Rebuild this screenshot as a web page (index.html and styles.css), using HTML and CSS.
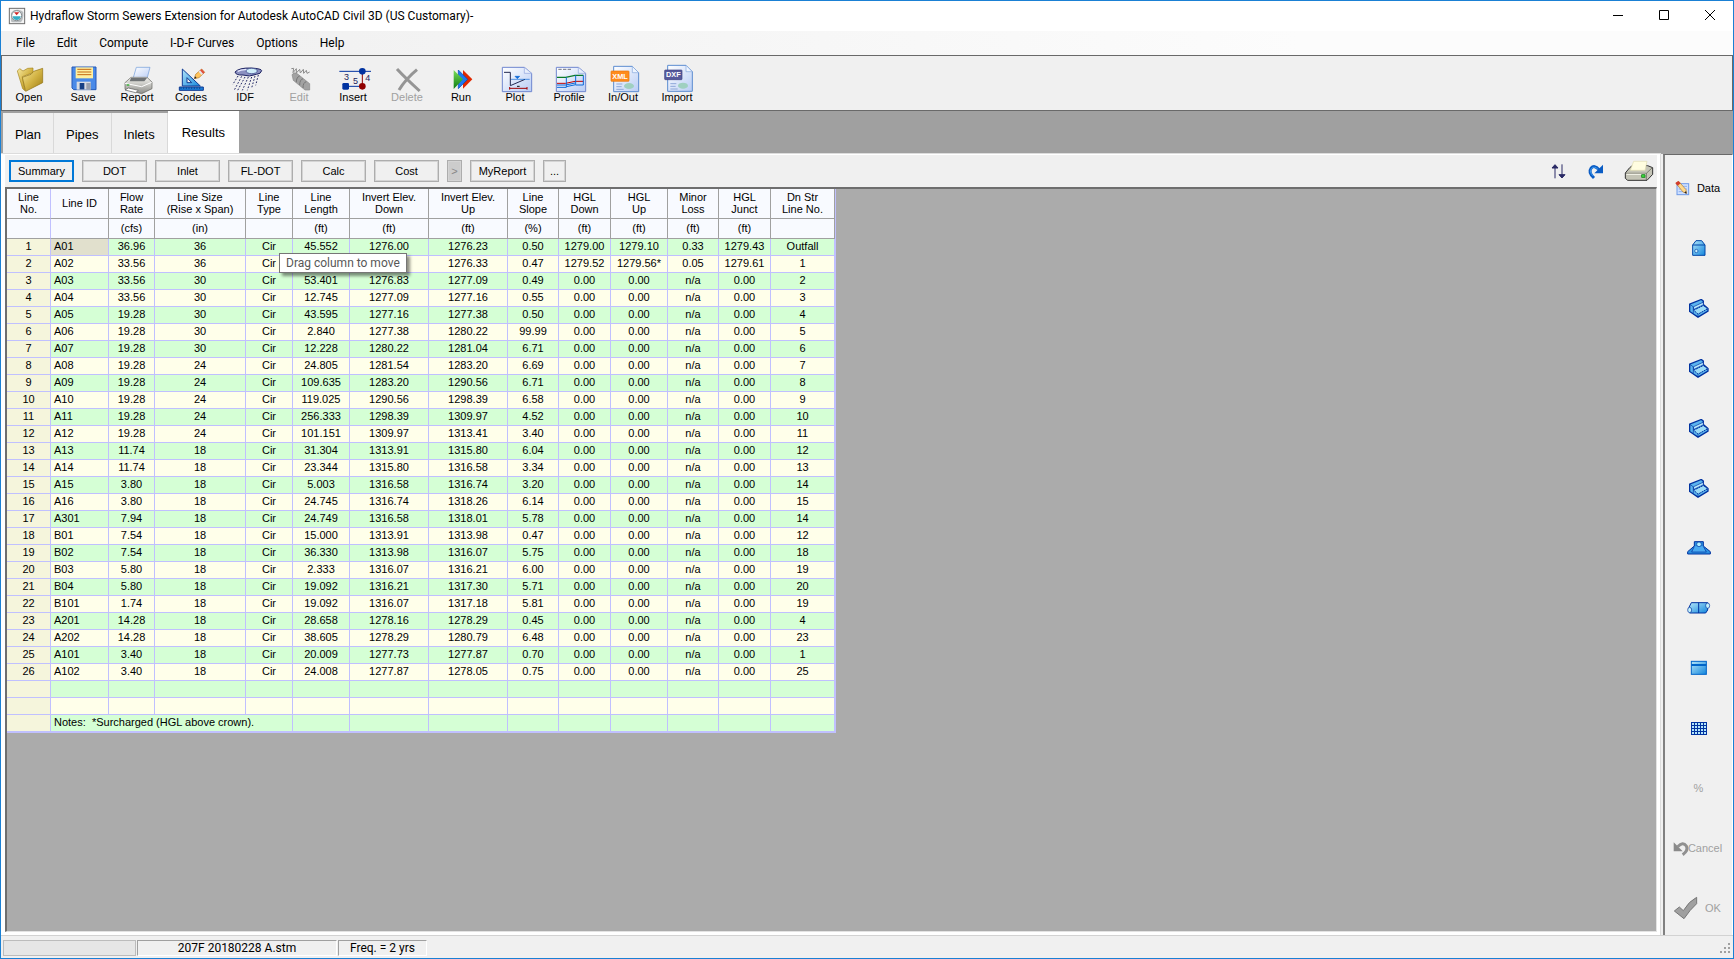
FILE: index.html
```html
<!DOCTYPE html>
<html lang="en">
<head>
    <meta charset="UTF-8">
    <meta name="viewport" content="width=device-width, initial-scale=1.0">
    <title>Hydraflow Storm Sewers Extension for Autodesk AutoCAD Civil 3D (US Customary)-</title>
    <link rel="stylesheet" href="styles.css">
</head>
<body>
    <!-- shared gradients and the repeated curb inlet icon -->
    <svg class="defs" width="0" height="0" aria-hidden="true">
        <defs>
            <linearGradient id="gold" x1="0" y1="0" x2="1" y2="1"><stop offset="0" stop-color="#f7e9a0"/><stop offset="0.5" stop-color="#d3b445"/><stop offset="1" stop-color="#9c7a10"/></linearGradient>
            <linearGradient id="blue" x1="0" y1="0" x2="1" y2="1"><stop offset="0" stop-color="#b4e6fa"/><stop offset="1" stop-color="#1286dc"/></linearGradient>
            <linearGradient id="green" x1="0" y1="0" x2="0" y2="1"><stop offset="0" stop-color="#7ce05a"/><stop offset="1" stop-color="#0a7a10"/></linearGradient>
            <linearGradient id="page" x1="0" y1="0" x2="1" y2="1"><stop offset="0" stop-color="#ffffff"/><stop offset="1" stop-color="#b9cdf5"/></linearGradient>
            <linearGradient id="grey" x1="0" y1="0" x2="0" y2="1"><stop offset="0" stop-color="#f4f4f0"/><stop offset="1" stop-color="#8c8c88"/></linearGradient>
        </defs>
        <symbol id="curb" viewBox="0 0 60 56">
            <path d="M2 15 L37 1 L43 6 V16 L57 28 V36 L27 54 L2 37z" fill="#5bb5ee" stroke="#0032a0" stroke-width="4"/>
            <path d="M13 23 L43 9 V17 L14 31z" fill="#b4e6fa" stroke="#0032a0" stroke-width="2"/>
            <path d="M14 33 L43 19 L56 29 L27 45z" fill="#9cdcf6" stroke="#0032a0" stroke-width="3" stroke-dasharray="6 2"/>
            <path d="M3 16 L13 23 V42 M27 45 V53" fill="none" stroke="#0032a0" stroke-width="2"/>
        </symbol>
    </svg>

    <header class="title-bar">
        <svg class="app-icon" viewBox="0 0 48 48">
            <rect x="1" y="1" width="46" height="46" fill="#f4f4f4" stroke="#6e6e6e" stroke-width="3"/>
            <path d="M6 15 V38 Q6 43 12 43 H35 Q44 38 43 13 Q38 5 25 5 Q12 5 6 15z" fill="#b9bdbf"/>
            <circle cx="23" cy="23" r="15" fill="#fff" stroke="#858c90" stroke-width="3"/>
            <path d="M11 25 H35 Q34 36 23 36 Q12 36 11 25z" fill="#35adc5"/>
            <path d="M15 13 H31 L23 22z" fill="#d22525"/>
        </svg>
        <h1>Hydraflow Storm Sewers Extension for Autodesk AutoCAD Civil 3D (US Customary)-</h1>
        <div class="window-buttons">
            <button type="button" aria-label="Minimize"><svg viewBox="0 0 10 10"><path d="M0 5.5H10"/></svg></button>
            <button type="button" aria-label="Maximize"><svg viewBox="0 0 10 10"><path d="M.5 .5H9.5V9.5H.5z"/></svg></button>
            <button type="button" aria-label="Close"><svg viewBox="0 0 10 10"><path d="M0 0L10 10M10 0L0 10"/></svg></button>
        </div>
    </header>

    <nav class="menu-bar">
        <button type="button">File</button>
        <button type="button">Edit</button>
        <button type="button">Compute</button>
        <button type="button">I-D-F Curves</button>
        <button type="button">Options</button>
        <button type="button">Help</button>
    </nav>

    <div class="toolbar">
        <button type="button">
            <svg viewBox="0 0 96 75">
                <path d="M13 15 L20 8 L30 15 L44 7 L60 6 V20 L28 32 L36 74 L29 68z" fill="url(#gold)" stroke="#a58318" stroke-width="2"/>
                <path d="M28 34 L54 25 L62 16 L89 7 V50 L38 76z" fill="url(#gold)" stroke="#8f700e" stroke-width="2"/>
            </svg>
            Open
        </button>
        <button type="button">
            <svg viewBox="0 0 96 75">
                <path d="M15 3 H87 V71 H20 L15 66z" fill="#4a8ae8" stroke="#2459b8" stroke-width="3"/>
                <path d="M26 4 H78 V37 H26z" fill="#fff0a0"/>
                <path d="M31 10 H73 M31 18 H73 M31 26 H73" stroke="#c56a14" stroke-width="3"/>
                <path d="M29 47 H71 V71 H29z" fill="#d9dce2"/>
                <path d="M38 51 H52 V70 H38z" fill="#174084"/>
                <path d="M58 51 H71 V71 H58z" fill="#9aa1ae"/>
            </svg>
            Save
        </button>
        <button type="button">
            <svg viewBox="0 0 96 75">
                <path d="M46 4 H87 L78 38 H36z" fill="url(#page)" stroke="#6c98d8" stroke-width="2"/>
                <path d="M30 34 H78 L93 48 V68 L62 83 L12 70 V50z" fill="url(#grey)" stroke="#60605c" stroke-width="2"/>
                <path d="M30 36 H78 L70 46 H26z" fill="#6f7375"/>
                <path d="M12 52 L62 62 L92 49" fill="none" stroke="#fff" stroke-width="3"/>
                <path d="M22 66 L52 73 L44 80 L12 72z" fill="#fff" stroke="#555" stroke-width="2"/>
                <path d="M17 57 H25" stroke="#2aae2a" stroke-width="4"/>
            </svg>
            Report
        </button>
        <button type="button">
            <svg viewBox="0 0 96 75">
                <path d="M22 9 L76 60 H22z M36 35 V50 H50z" fill="url(#blue)" fill-rule="evenodd" stroke="#103c94" stroke-width="3"/>
                <path d="M13 63 H85 V73 H13z" fill="#1c7ed8" stroke="#103c94" stroke-width="3"/>
                <path d="M18 64 V69 M26 64 V69 M34 64 V69 M42 64 V69 M50 64 V69 M58 64 V69 M66 64 V69 M74 64 V69" stroke="#08306e" stroke-width="2"/>
                <path d="M58 38 L62 25 L80 9 L89 19 L72 35z" fill="#ffc45c" stroke="#b07a30" stroke-width="2"/>
                <path d="M74 14 L80 9 L89 19 L83 25z" fill="#e0503c"/>
                <path d="M71 17 L75 13 L84 23 L80 27z" fill="#e6e6ee"/>
                <path d="M58 38 L60 31 L65 36z" fill="#222"/>
            </svg>
            Codes
        </button>
        <button type="button">
            <svg viewBox="0 0 96 75">
                <path d="M18 18 Q30 5 66 6 Q98 8 98 14 Q96 24 82 25 Q60 34 42 27 Q20 28 18 18z" fill="#8a90c0" stroke="#1f2563" stroke-width="3"/>
                <ellipse cx="68" cy="15" rx="17" ry="8" fill="#cfeefa" stroke="#2d3a80" stroke-width="2"/>
                <path d="M26 16 Q38 10 52 11" stroke="#e8eaff" stroke-width="4" fill="none"/>
                <path d="M27 30 L11 56 M38 31 L16 72 M48 33 L26 73 M58 33 L40 73 M68 33 L55 73 M78 30 L68 66 M88 27 L80 58" stroke="#1f2563" stroke-width="3" stroke-dasharray="5 5" fill="none"/>
            </svg>
            IDF
        </button>
        <button type="button" disabled>
            <svg viewBox="0 0 96 75">
                <path d="M25 8 L32 7 L30 20 L40 8 L40 21 L50 10 L52 21 L61 10 L62 22 L70 13 L72 22 L80 18" fill="none" stroke="#8c8c8c" stroke-width="3"/>
                <path d="M27 26 Q34 16 44 24 L80 53 V72 H66 L31 43z" fill="#a2a2a2" stroke="#888" stroke-width="2"/>
                <path d="M50 30 Q40 33 40 49 M60 38 Q50 41 50 57 M70 47 Q60 49 60 66" fill="none" stroke="#777" stroke-width="3"/>
            </svg>
            Edit
        </button>
        <button type="button">
            <svg viewBox="0 0 96 75">
                <path d="M7 16 H102 M26 61 H76" stroke="#0032a0" stroke-width="3"/>
                <path d="M76 16 V61" stroke="#900000" stroke-width="3"/>
                <circle cx="76" cy="16" r="10" fill="#0032a0"/>
                <circle cx="76" cy="61" r="10" fill="#900000"/>
                <rect x="16" y="51" width="20" height="20" rx="4" fill="#0032a0"/>
                <text x="21" y="43" class="svg-digit">3</text>
                <text x="48" y="54" class="svg-digit">5</text>
                <text x="85" y="45" class="svg-digit">4</text>
            </svg>
            Insert
        </button>
        <button type="button" disabled>
            <svg viewBox="0 0 96 75">
                <path d="M18 9 Q42 35 86 75 M78 11 Q45 38 24 72" fill="none" stroke="#959595" stroke-width="9"/>
            </svg>
            Delete
        </button>
        <button type="button">
            <svg viewBox="0 0 96 75">
                <path d="M54 12 L82 40 L54 68z" fill="#e02800"/>
                <path d="M40 12 L68 40 L40 68z" fill="#1c78f0" stroke="#0046b4" stroke-width="2"/>
                <path d="M26 12 L54 40 L26 69z" fill="url(#green)"/>
            </svg>
            Run
        </button>
        <button type="button">
            <svg viewBox="0 0 96 75">
                <path d="M10 4 H76 L98 22 V77 H10z" fill="url(#page)" stroke="#6f86cf" stroke-width="3"/>
                <path d="M76 4 V22 H98z" fill="#e8effc" stroke="#8ea2dc" stroke-width="2"/>
                <path d="M15 19 H34 V59 L78 40" fill="none" stroke="#222850" stroke-width="3"/>
                <path d="M36 40 H92 M48 31 H62 L55 38z" fill="#0a68d8" stroke="#0a68d8" stroke-width="2"/>
                <path d="M32 67 H84 M32 63 V71 M84 63 V71" stroke="#a00000" stroke-width="3"/>
                <path d="M54 61 H62" stroke="#111" stroke-width="3"/>
            </svg>
            Plot
        </button>
        <button type="button">
            <svg viewBox="0 0 96 75">
                <path d="M10 4 H76 L98 22 V77 H10z" fill="url(#page)" stroke="#6f86cf" stroke-width="3"/>
                <path d="M76 4 V22 H98z" fill="#e8effc" stroke="#8ea2dc" stroke-width="2"/>
                <path d="M16 10 H54" stroke="#334" stroke-width="2" stroke-dasharray="10 4"/>
                <path d="M12 34 H38 L66 28 H91" fill="none" stroke="#0a7a28" stroke-width="4"/>
                <path d="M12 52 H38 L66 46 H91" fill="none" stroke="#c00000" stroke-width="3"/>
                <path d="M12 64 H40 V34 M40 62 L68 56 V28 M68 57 H91 V28 M12 57 H38 L66 51" fill="none" stroke="#0a68d8" stroke-width="3"/>
            </svg>
            Profile
        </button>
        <button type="button">
            <svg viewBox="0 0 96 75">
                <path d="M20 1 H76 L95 20 V77 H20z" fill="url(#page)" stroke="#5c8cd0" stroke-width="3"/>
                <path d="M76 1 V20 H95z" fill="#edf4ff" stroke="#83a8dc" stroke-width="2"/>
                <ellipse cx="66" cy="60" rx="15" ry="9" fill="#9fd0c0"/>
                <path d="M28 54 H46 M28 62 H44 M28 70 H50" stroke="#8fa8d8" stroke-width="3"/>
                <rect x="12" y="15" width="54" height="31" rx="2" fill="#ff8c1e" stroke="#e87408" stroke-width="2"/>
                <text x="39" y="38" class="svg-tag">XML</text>
            </svg>
            In/Out
        </button>
        <button type="button">
            <svg viewBox="0 0 96 75">
                <path d="M20 -2 H75 L94 17 V76 H20z" fill="url(#page)" stroke="#5c8cd0" stroke-width="3"/>
                <path d="M75 -2 V17 H94z" fill="#edf4ff" stroke="#83a8dc" stroke-width="2"/>
                <ellipse cx="66" cy="59" rx="15" ry="9" fill="#9fd0c0"/>
                <path d="M28 53 H46 M28 61 H44 M28 69 H50" stroke="#8fa8d8" stroke-width="3"/>
                <rect x="11" y="12" width="52" height="29" rx="2" fill="#565a9c" stroke="#3c4080" stroke-width="2"/>
                <text x="37" y="34" class="svg-tag">DXF</text>
            </svg>
            Import
        </button>
    </div>

    <nav class="tabs">
        <button type="button">Plan</button>
        <button type="button">Pipes</button>
        <button type="button">Inlets</button>
        <button type="button" class="active">Results</button>
    </nav>

    <main class="workspace">
        <section class="results">
            <div class="report-bar">
                <button type="button" class="selected">Summary</button>
                <button type="button">DOT</button>
                <button type="button">Inlet</button>
                <button type="button">FL-DOT</button>
                <button type="button">Calc</button>
                <button type="button">Cost</button>
                <button type="button" class="narrow" disabled>&gt;</button>
                <button type="button">MyReport</button>
                <button type="button" class="more">...</button>
                <div class="report-actions">
                    <button type="button" aria-label="Sort">
                        <svg width="15" height="15" viewBox="0 0 45 45"><path d="M12 43 V4 M3 12 L12 2 L21 12z M33 1 V40 M24 32 L33 42 L42 32z" fill="#2b2b66" stroke="#2b2b66" stroke-width="3"/></svg>
                    </button>
                    <button type="button" aria-label="Refresh">
                        <svg width="15" height="15" viewBox="0 0 45 45"><path d="M18 42 Q0 25 9 13 Q19 1 33 17" fill="none" stroke="#0a5cc4" stroke-width="9"/><path d="M16 36 Q2 24 11 13 Q19 5 30 16" fill="none" stroke="#3f9bf0" stroke-width="3"/><path d="M45 2 V28 H19z" fill="#0a5cc4"/></svg>
                    </button>
                    <button type="button" aria-label="Print">
                        <svg width="28" height="20" viewBox="0 0 84 60"><path d="M14 20 L1 36 V52 L8 58 H66 L83 40 V20 L68 14 H22z" fill="#c4c4b6" stroke="#333" stroke-width="3"/><path d="M26 1 H66 L60 28 H16z" fill="#fffde0" stroke="#e0dcb0" stroke-width="2"/><path d="M2 37 H64 L82 20 M64 37 V57" fill="none" stroke="#55554c" stroke-width="2"/><path d="M4 40 H62" stroke="#efefe4" stroke-width="4"/><rect x="50" y="41" width="10" height="8" fill="#36d036" stroke="#0a7a10" stroke-width="2"/></svg>
                    </button>
                </div>
            </div>

            <div class="grid-area">
                <table class="results-table">
                    <colgroup>
                        <col class="c44"><col class="c58"><col class="c46"><col class="c91"><col class="c47"><col class="c57"><col class="c79"><col class="c79"><col class="c51"><col class="c52"><col class="c57"><col class="c51"><col class="c52"><col class="c64">
                    </colgroup>
                    <thead>
                        <tr>
                            <th>Line<br>No.</th>
                            <th>Line ID</th>
                            <th>Flow<br>Rate</th>
                            <th>Line Size<br>(Rise x Span)</th>
                            <th>Line<br>Type</th>
                            <th>Line<br>Length</th>
                            <th>Invert Elev.<br>Down</th>
                            <th>Invert Elev.<br>Up</th>
                            <th>Line<br>Slope</th>
                            <th>HGL<br>Down</th>
                            <th>HGL<br>Up</th>
                            <th>Minor<br>Loss</th>
                            <th>HGL<br>Junct</th>
                            <th>Dn Str<br>Line No.</th>
                        </tr>
                        <tr class="units">
                            <td></td><td></td><td>(cfs)</td><td>(in)</td><td></td><td>(ft)</td><td>(ft)</td><td>(ft)</td><td>(%)</td><td>(ft)</td><td>(ft)</td><td>(ft)</td><td>(ft)</td><td></td>
                        </tr>
                    </thead>
                    <tbody id="results-body"></tbody>
                </table>
                <div class="tooltip" role="tooltip">Drag column to move</div>
            </div>
        </section>

        <aside class="side-bar">
            <button type="button" class="data">
                <svg width="14" height="14" viewBox="0 0 42 42"><rect x="6" y="8" width="35" height="33" fill="#cfe0ff" stroke="#6f9ae8" stroke-width="3"/><path d="M11 16 H36 M11 24 H36 M11 32 H30" stroke="#8db0ee" stroke-width="3"/><path d="M3 7 L11 1 L33 26 L35 37 L24 33z" fill="#ffd98a" stroke="#b07a30" stroke-width="2"/><path d="M1 6 L10 0 L17 7 L8 14z" fill="#d23c2c"/><path d="M35 38 L33 30 L28 35z" fill="#222"/></svg>
                Data
            </button>
            <button type="button" aria-label="Manhole"><svg width="14" height="16" viewBox="0 0 42 48"><path d="M2 15 L12 2 H29 L39 15 V46 H2z M2 15 H39" fill="url(#blue)" stroke="#0046a8" stroke-width="3"/><circle cx="13" cy="33" r="5" fill="#c8f0ff" stroke="#0046a8" stroke-width="2"/></svg></button>
            <button type="button" aria-label="Curb inlet"><svg width="20" height="19"><use href="#curb"/></svg></button>
            <button type="button" aria-label="Grate inlet"><svg width="20" height="19"><use href="#curb"/></svg></button>
            <button type="button" aria-label="Combination inlet"><svg width="20" height="19"><use href="#curb"/></svg></button>
            <button type="button" aria-label="Generic inlet"><svg width="20" height="19"><use href="#curb"/></svg></button>
            <button type="button" aria-label="Headwall"><svg width="24" height="14" viewBox="0 0 72 42"><path d="M2 39 V32 L22 15 V2 H49 V15 L70 32 V39z" fill="#2a8fe0" stroke="#0032a0" stroke-width="3"/><path d="M22 16 L14 33 H58 L49 16" fill="#4aaaf0" stroke="#0032a0" stroke-width="2"/><circle cx="36" cy="10" r="7" fill="#aef0ff" stroke="#0032a0" stroke-width="2"/></svg></button>
            <button type="button" aria-label="Pipe"><svg width="24" height="12" viewBox="0 0 72 36"><path d="M13 2 H62 V24 L56 33 H8 L6 16z" fill="url(#blue)" stroke="#0032a0" stroke-width="3"/><path d="M35 2 V33" stroke="#0032a0" stroke-width="3"/><ellipse cx="8" cy="24" rx="6" ry="8" fill="#c4f2fc" stroke="#0032a0" stroke-width="2"/><ellipse cx="62" cy="11" rx="6" ry="8" fill="#c4f2fc" stroke="#0032a0" stroke-width="2"/></svg></button>
            <button type="button" aria-label="Window"><svg width="16" height="14" viewBox="0 0 48 42"><rect x="1" y="1" width="45" height="39" fill="url(#blue)" stroke="#0064c8" stroke-width="3"/><path d="M1 12 H46" stroke="#0064c8" stroke-width="6"/></svg></button>
            <button type="button" aria-label="Table"><svg width="16" height="13" viewBox="0 0 48 39"><rect width="48" height="39" fill="#0032a0"/><path d="M3 6H45M3 15H45M3 24H45M3 33H45" stroke="#b4e6fa" stroke-width="6" stroke-dasharray="6 3"/></svg></button>
            <button type="button" disabled>%</button>
            <button type="button" class="cancel" disabled><svg width="15" height="15" viewBox="0 0 45 45"><path d="M2 4 V31 H29z" fill="#8a8a8a"/><path d="M14 17 Q30 0 40 15 Q47 28 29 41" fill="none" stroke="#909090" stroke-width="9"/></svg>Cancel</button>
            <button type="button" class="ok" disabled><svg width="23" height="22" viewBox="0 0 69 66"><path d="M1 42 L16 30 L28 41 Q45 12 68 1 V20 Q48 38 30 65z" fill="#a0a0a0" stroke="#777" stroke-width="3"/></svg>OK</button>
        </aside>
    </main>

    <footer class="status-bar">
        <div class="progress"></div>
        <div class="file-name">207F 20180228 A.stm</div>
        <div class="frequency">Freq. = 2 yrs</div>
        <svg class="grip" width="11" height="11" viewBox="0 0 11 11"><path d="M8 0h2v2h-2zM4 4h2v2h-2zM8 4h2v2h-2zM0 8h2v2h-2zM4 8h2v2h-2zM8 8h2v2h-2z"/></svg>
    </footer>

    <script>
        // id, flow, size, length, invert down, invert up, slope, hgl down, hgl up, loss, junct, downstream
        const lines = [
            'A01 36.96 36 45.552 1276.00 1276.23 0.50 1279.00 1279.10 0.33 1279.43 Outfall',
            'A02 33.56 36   1276.33 0.47 1279.52 1279.56* 0.05 1279.61 1',
            'A03 33.56 30 53.401 1276.83 1277.09 0.49 0.00 0.00 n/a 0.00 2',
            'A04 33.56 30 12.745 1277.09 1277.16 0.55 0.00 0.00 n/a 0.00 3',
            'A05 19.28 30 43.595 1277.16 1277.38 0.50 0.00 0.00 n/a 0.00 4',
            'A06 19.28 30 2.840 1277.38 1280.22 99.99 0.00 0.00 n/a 0.00 5',
            'A07 19.28 30 12.228 1280.22 1281.04 6.71 0.00 0.00 n/a 0.00 6',
            'A08 19.28 24 24.805 1281.54 1283.20 6.69 0.00 0.00 n/a 0.00 7',
            'A09 19.28 24 109.635 1283.20 1290.56 6.71 0.00 0.00 n/a 0.00 8',
            'A10 19.28 24 119.025 1290.56 1298.39 6.58 0.00 0.00 n/a 0.00 9',
            'A11 19.28 24 256.333 1298.39 1309.97 4.52 0.00 0.00 n/a 0.00 10',
            'A12 19.28 24 101.151 1309.97 1313.41 3.40 0.00 0.00 n/a 0.00 11',
            'A13 11.74 18 31.304 1313.91 1315.80 6.04 0.00 0.00 n/a 0.00 12',
            'A14 11.74 18 23.344 1315.80 1316.58 3.34 0.00 0.00 n/a 0.00 13',
            'A15 3.80 18 5.003 1316.58 1316.74 3.20 0.00 0.00 n/a 0.00 14',
            'A16 3.80 18 24.745 1316.74 1318.26 6.14 0.00 0.00 n/a 0.00 15',
            'A301 7.94 18 24.749 1316.58 1318.01 5.78 0.00 0.00 n/a 0.00 14',
            'B01 7.54 18 15.000 1313.91 1313.98 0.47 0.00 0.00 n/a 0.00 12',
            'B02 7.54 18 36.330 1313.98 1316.07 5.75 0.00 0.00 n/a 0.00 18',
            'B03 5.80 18 2.333 1316.07 1316.21 6.00 0.00 0.00 n/a 0.00 19',
            'B04 5.80 18 19.092 1316.21 1317.30 5.71 0.00 0.00 n/a 0.00 20',
            'B101 1.74 18 19.092 1316.07 1317.18 5.81 0.00 0.00 n/a 0.00 19',
            'A201 14.28 18 28.658 1278.16 1278.29 0.45 0.00 0.00 n/a 0.00 4',
            'A202 14.28 18 38.605 1278.29 1280.79 6.48 0.00 0.00 n/a 0.00 23',
            'A101 3.40 18 20.009 1277.73 1277.87 0.70 0.00 0.00 n/a 0.00 1',
            'A102 3.40 18 24.008 1277.87 1278.05 0.75 0.00 0.00 n/a 0.00 25'
        ];

        const body = document.getElementById('results-body');

        function addRow(values) {
            const row = body.insertRow();
            values.forEach(value => {
                row.insertCell().textContent = value;
            });
            return row;
        }

        lines.forEach((line, index) => {
            const values = line.split(' ');
            values.splice(3, 0, 'Cir');
            addRow([index + 1, ...values]);
        });
        body.rows[0].cells[1].className = 'current';

        addRow(Array(14).fill(''));
        addRow(Array(14).fill(''));
        const notes = addRow(['', 'Notes:\u00a0 *Surcharged (HGL above crown).', ...Array(9).fill('')]);
        notes.cells[1].colSpan = 4;
    </script>
</body>
</html>
```
FILE: styles.css
```css
* {
    box-sizing: border-box;
}
body {
    margin: 0;
    height: 100vh;
    display: flex;
    flex-direction: column;
    border: 1px solid #1a80d4;
    background-color: #f0f0f0;
    color: #000;
    font-family: "Liberation Sans", Arial, sans-serif;
    font-size: 11px;
    overflow: hidden;
}
button {
    margin: 0;
    padding: 0;
    border: 0;
    background: none;
    color: inherit;
    font: inherit;
}
button:disabled {
    color: #a0a0a0;
}
svg {
    flex-shrink: 0;
    overflow: visible;
}
.defs {
    position: absolute;
}

/* title and menu */
.title-bar {
    display: flex;
    align-items: center;
    height: 30px;
    padding-left: 8px;
    background-color: #fff;
}
.app-icon {
    width: 16px;
    height: 16px;
}
.title-bar h1 {
    flex: 1;
    margin: 0 0 0 5px;
    font: 12px Roboto, "Segoe UI", sans-serif;
}
.window-buttons {
    display: flex;
}
.window-buttons button {
    width: 46px;
    height: 30px;
}
.window-buttons svg {
    width: 10px;
    height: 10px;
    fill: none;
    stroke: #000;
}
.menu-bar {
    display: flex;
    gap: 22px;
    height: 24px;
    padding-left: 15px;
    background: linear-gradient(to right, #f0f0f0, #f2f2f2 20%, #fcfcfc 75%);
    font: 12px Roboto, "Segoe UI", sans-serif;
}

/* main toolbar */
.toolbar {
    display: flex;
    height: 56px;
    border: 1px solid #696969;
}
.toolbar button {
    display: flex;
    flex-direction: column;
    align-items: center;
    width: 54px;
    padding-top: 10px;
    line-height: 12px;
}
.toolbar svg {
    width: 32px;
    height: 25px;
}
.svg-digit {
    font-size: 27px;
    fill: #1c1c5c;
}
.svg-tag {
    font-size: 22px;
    font-weight: bold;
    fill: #fff;
    text-anchor: middle;
}

/* tabs */
.tabs {
    display: flex;
    align-items: flex-end;
    height: 43px;
    padding-left: 2px;
    background-color: #a0a0a0;
    font-size: 13px;
}
.tabs button {
    height: 41px;
    padding: 2px 12px 0;
    border-right: 1px solid #d9d9d9;
    background-color: #f0f0f0;
}
.tabs button.active {
    height: 43px;
    padding: 0 14px;
    border: 0;
    background-color: #fff;
}

/* results panel */
.workspace {
    flex: 1;
    display: flex;
    min-height: 0;
}
.results {
    flex: 1;
    display: flex;
    flex-direction: column;
    margin-right: 3px;
    border: solid #fff;
    border-width: 1px 3px 3px 4px;
    outline: 1px solid #dcdcdc;
}
.report-bar {
    display: flex;
    align-items: center;
    gap: 8px;
    height: 32px;
    padding-left: 4px;
}
.report-bar > button {
    width: 65px;
    height: 22px;
    border: 1px solid #adadad;
    box-shadow: inset 0 0 0 1px #d4d4d4;
}
.report-bar > button.selected {
    border: 2px solid #0078d7;
    box-shadow: none;
}
.report-bar > button.narrow {
    width: 15px;
    background-color: #cccccc;
    color: #888;
}
.report-bar > button.more {
    width: 23px;
}
.report-actions {
    display: flex;
    align-items: center;
    gap: 22px;
    margin-left: auto;
    padding-right: 4px;
}
.report-actions button {
    display: flex;
}
.grid-area {
    flex: 1;
    position: relative;
    border: 2px solid #6e6e6e;
    border-right: 1px solid #e3e3e3;
    border-bottom: 1px solid #e3e3e3;
    background-color: #ababab;
}
.results-table {
    table-layout: fixed;
    width: 829px;
    border-spacing: 0;
    border-right: 1px solid #c0c0ff;
    border-bottom: 1px solid #c0c0ff;
    line-height: 12px;
}
.c44 { width: 44px; }
.c46 { width: 46px; }
.c47 { width: 47px; }
.c51 { width: 51px; }
.c52 { width: 52px; }
.c57 { width: 57px; }
.c58 { width: 58px; }
.c64 { width: 64px; }
.c79 { width: 79px; }
.c91 { width: 91px; }
.results-table th,
.results-table td {
    padding: 0;
    border: solid #c0c0ff;
    border-width: 0 1px 1px 0;
    text-align: center;
    white-space: nowrap;
}
.results-table th {
    height: 30px;
    padding-bottom: 2px;
    font-weight: normal;
}
.results-table thead th,
.results-table thead td {
    border-color: #a0a0a0;
    background-color: #f8faff;
}
.results-table thead :first-child {
    border-right-color: #c0c0ff;
}
.results-table .units td {
    height: 20px;
    padding-bottom: 2px;
}
.results-table tbody td {
    height: 17px;
    padding-bottom: 2px;
}
.results-table tbody tr:nth-child(odd) {
    background-color: #d5ffd5;
}
.results-table tbody tr:nth-child(even) {
    background-color: #ffffea;
}
.results-table tbody td:first-child {
    background-color: #f5f5dc;
}
.results-table tbody td:nth-child(2) {
    padding-left: 3px;
    text-align: left;
}
.results-table .current {
    background-color: #e1e0cd;
}
.tooltip {
    position: absolute;
    top: 64px;
    left: 272px;
    padding: 0 6px;
    border: 1px solid #767676;
    background-color: #fff;
    box-shadow: 3px 3px 3px rgba(0, 0, 0, 0.45);
    color: #575757;
    font: 12px/18px Roboto, "Segoe UI", sans-serif;
}

/* right side bar */
.side-bar {
    display: flex;
    flex-direction: column;
    width: 70px;
    padding-top: 3px;
    border-top: 1px solid #696969;
    border-left: 2px solid #808080;
    border-right: 1px solid #fff;
}
.side-bar button {
    display: flex;
    align-items: center;
    justify-content: center;
    flex: 0 0 60px;
}
.side-bar .data,
.side-bar .ok {
    gap: 8px;
    padding-right: 2px;
}
.side-bar .cancel {
    padding-right: 2px;
}

/* status bar */
.status-bar {
    display: flex;
    align-items: center;
    gap: 1px;
    height: 23px;
    padding: 2px 2px 0;
    border-top: 1px solid #d2d2d2;
    font: 12px/14px Roboto, "Segoe UI", sans-serif;
    text-align: center;
}
.status-bar div {
    height: 16px;
    border: 1px solid #a0a0a0;
    border-right-color: #fff;
    border-bottom-color: #fff;
}
.status-bar .progress {
    width: 133px;
    border-color: #bcbcbc;
    background-color: #e6e6e6;
}
.file-name {
    width: 200px;
}
.frequency {
    width: 89px;
}
.grip {
    margin-left: auto;
    fill: #a0a0a0;
}
```
